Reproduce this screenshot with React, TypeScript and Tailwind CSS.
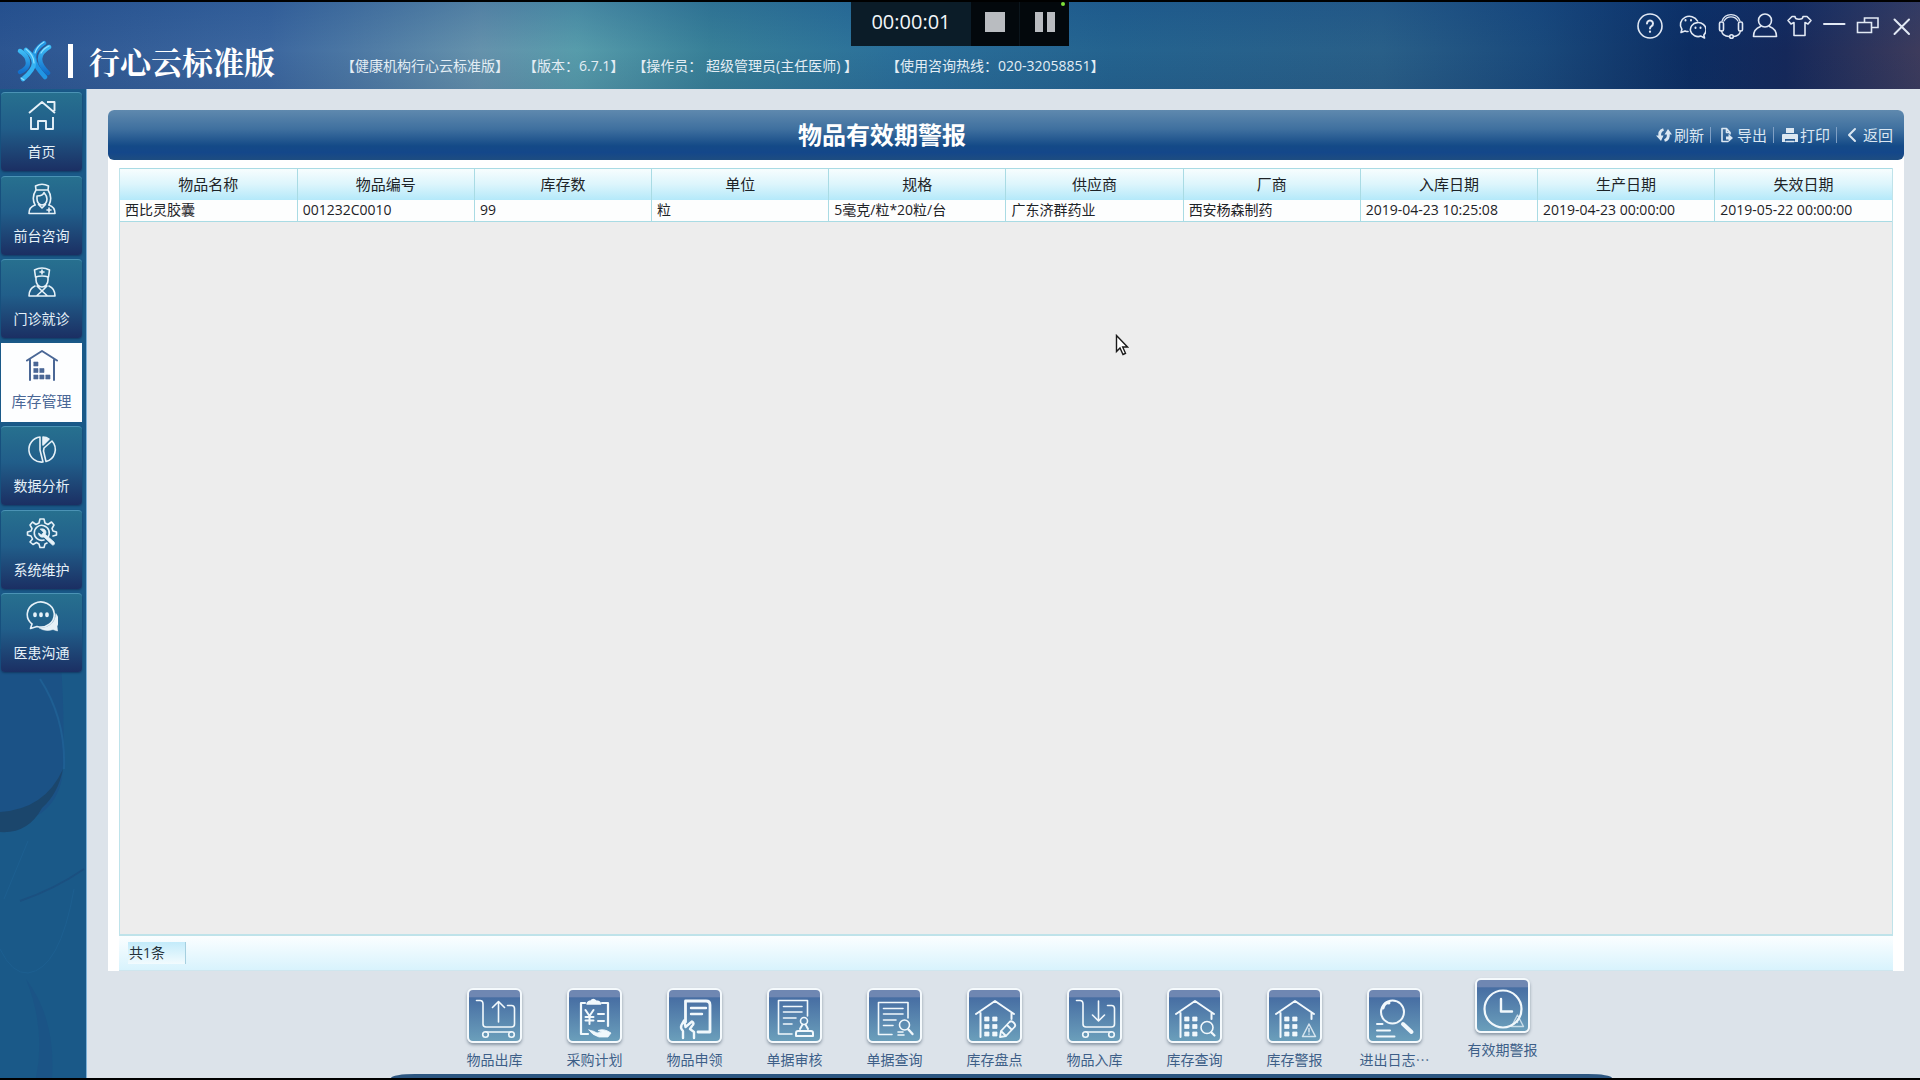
import type { ReactNode } from "react";

const FONT = "font-['Open_Sans','Noto_Sans_CJK_SC',sans-serif]";

function Icon({ children, box = 32, className }: { children: ReactNode; box?: number; className: string }) {
  return (
    <svg
      viewBox={`0 0 ${box} ${box}`}
      className={className}
      fill="none"
      stroke="currentColor"
      strokeWidth={1.6}
      strokeLinecap="round"
      strokeLinejoin="round"
      aria-hidden="true"
    >
      {children}
    </svg>
  );
}

/* ---------- top bar ---------- */

function Logo() {
  return (
    <svg viewBox="0 0 36 42" className="h-[42px] w-9" fill="none" aria-hidden="true">
      <defs>
        <linearGradient id="logoA" x1="0" y1="0" x2="0" y2="1">
          <stop offset="0" stopColor="#3dbcf6" />
          <stop offset="1" stopColor="#126fcb" />
        </linearGradient>
      </defs>
      <g stroke="url(#logoA)" strokeWidth="4.500" strokeLinecap="round" strokeLinejoin="round">
        <path d="M4 11 C9 14 12 19 12 23 C12 27 9 30 4 32" />
        <path d="M28 3 C22 7 18 12 18 17 C18 24 22 29 29 37" stroke="#2196e4" />
        <path d="M33 7 C28 10 24 14 24 19 C24 25 28 29 32 33" />
        <path d="M10 10 C15 14 18 18 18 23 C18 29 13 34 7 39" stroke="#35b2f2" />
      </g>
      <path d="M10 9 C15 13 18 18 18 23 M28 2 C23 5 20 9 19 13 M33 6 Q28 8 25 13 M5 38 8 40" stroke="#8fe0ff" strokeWidth="1.200" strokeLinecap="round" />
    </svg>
  );
}

const windowButtons: { label: string; width: string; icon: ReactNode }[] = [
  {
    label: "帮助",
    width: "w-10",
    icon: (
      <Icon box={28} className="size-7">
        <circle cx="14" cy="14" r="12" />
        <path d="M11 11.5a3 3 0 1 1 4.500 2.600q-1.500.9-1.500 2.400" strokeWidth="2" />
        <path d="M14 19.500v.3" strokeWidth="2.200" />
      </Icon>
    ),
  },
  {
    label: "微信",
    width: "w-11",
    icon: (
      <Icon box={28} className="size-7">
        <path d="M10 19.500q-1.500 0-3-.6L3 20.500l.9-3.300A9 8.300 0 1 1 19.500 9" />
        <path d="M28 17.500a7.800 7 0 1 0-5 6.600l3.500 1.900-.7-3A6.800 6.800 0 0 0 28 17.500Z" />
        <path d="M7.500 8v.5M13 8v.5M17.500 15.500v.5M22.500 15.500v.5" strokeWidth="2" />
      </Icon>
    ),
  },
  {
    label: "客服",
    width: "w-[34px]",
    icon: (
      <Icon box={28} className="size-7">
        <path d="M5 9a9.500 9.500 0 0 1 18 0M7 9a8 8 0 0 1 14 0" strokeWidth="1.200" />
        <rect x="2.500" y="10" width="4" height="9" rx="1.500" />
        <rect x="21.500" y="10" width="4" height="9" rx="1.500" />
        <path d="M4.500 19q1 5 7.500 5.500M23.500 19q-1 5-7 5.500" strokeWidth="1.300" />
        <circle cx="14.500" cy="24.500" r="1.800" />
      </Icon>
    ),
  },
  {
    label: "用户",
    width: "w-[34px]",
    icon: (
      <Icon box={28} className="size-7">
        <circle cx="14" cy="8.500" r="6.500" />
        <path d="M9.500 14.500Q2.500 17 2.500 24.500H25.500Q25.500 17 18.500 14.500" />
      </Icon>
    ),
  },
  {
    label: "换肤",
    width: "w-[34px]",
    icon: (
      <Icon box={28} className="size-7">
        <path d="M10 4.500H7L3 8.500l3 3.500 3-1.500V23.500H20V10.500l3 1.500 3-3.500L22 4.500H18a4 2.700 0 0 1-8 0Z" />
      </Icon>
    ),
  },
  {
    label: "最小化",
    width: "w-9",
    icon: (
      <Icon box={28} className="size-7">
        <path d="M4 12H24.500" strokeWidth="2" />
      </Icon>
    ),
  },
  {
    label: "还原",
    width: "w-8",
    icon: (
      <Icon box={28} className="size-7">
        <path d="M3.500 10.500H17.500V20.500H3.500ZM10.500 10V6H24V15.500H18" strokeLinejoin="miter" />
      </Icon>
    ),
  },
  {
    label: "关闭",
    width: "w-9",
    icon: (
      <Icon box={28} className="size-7">
        <path d="M6.500 7.500 21 22M21 7.500 6.500 22" strokeWidth="2" />
      </Icon>
    ),
  },
];

function Recorder() {
  return (
    <div className="absolute left-1/2 top-0 flex h-11 -translate-x-1/2 text-[#b9bcc0]">
      <div className="flex w-[120px] items-center justify-center bg-[#0b1c28] pb-1 text-xl leading-5 text-[#f3f6f8]">00:00:01</div>
      <button type="button" aria-label="停止" className="flex w-12 items-center justify-center bg-[#03080c] pb-2">
        <span className="mt-1 size-5 bg-current" />
      </button>
      <button type="button" aria-label="暂停" className="relative flex w-[50px] items-center justify-center gap-1 border-l border-[#0b151c] bg-[#03080c] pb-2">
        <span className="mt-1 h-5 w-2 bg-current" />
        <span className="mt-1 h-5 w-2 bg-current" />
        <span className="absolute right-1 top-0 size-1 rounded-full bg-[#7ee03a]" />
      </button>
    </div>
  );
}

function TopBar() {
  return (
    <header className="relative flex h-[87px] shrink-0 items-end bg-[linear-gradient(to_right,#2c5591_0%,#3c679f_14%,#6592ac_25%,#579cab_30%,#388098_37%,#2a6f9a_47%,#24638f_58%,#295f88_72%,#1a4a7c_80%,#0c2d62_88%,#15285a_93%,#3d3b5c_100%)]">
      <div className="absolute inset-0 bg-[linear-gradient(to_bottom,rgba(10,60,130,0.22),transparent_55%,rgba(20,40,80,0.1))]" />
      <div className="relative flex h-[50px] w-[341px] items-center gap-4 pb-1.5 pl-4">
        <Logo />
        <span className="h-[34px] w-[5px] bg-white" />
        <h1 className="whitespace-nowrap font-['Noto_Serif_CJK_SC','Noto_Sans_CJK_SC',serif] text-[31px] font-bold leading-8 text-white">
          行心云标准版
        </h1>
      </div>
      <div className="relative flex whitespace-nowrap pb-[13px] text-sm leading-5 text-[#e3edf4]">
        <span className="mr-3.5">【健康机构行心云标准版】</span>
        <span className="mr-2">【版本：6.7.1】</span>
        <span className="mr-7">【操作员： 超级管理员(主任医师) 】</span>
        <span>【使用咨询热线：020-32058851】</span>
      </div>
      <nav className="relative ml-auto flex self-start pt-[10px] text-[#e2e9f4]" aria-label="窗口">
        {windowButtons.map((b) => (
          <button key={b.label} type="button" aria-label={b.label} className={`${b.width} flex justify-center`}>
            {b.icon}
          </button>
        ))}
      </nav>
      <Recorder />
    </header>
  );
}

/* ---------- sidebar ---------- */

const sections: { label: string; active?: boolean; icon: ReactNode }[] = [
  {
    label: "首页",
    icon: <path d="M3 14 16 3 29 14M21 3H28.500V12M5 18V30H12V22H20V30H27V18" strokeLinecap="butt" strokeWidth="1.900" />,
  },
  {
    label: "前台咨询",
    icon: (
      <>
        <path d="M9.500 3Q16-.5 22.500 3L22 7H10ZM10 7C6 13 7 18 9 22M22 7C26 13 25 18 23 22" />
        <path d="M11 13Q17 13 18 9.500 21 13 21 16A5 6 0 0 1 11 16ZM12.500 21.500 16 25 19.500 21.500M9 22Q3 24 3 30.500H29Q29 24 23 22M21 27H25M23 25V29" />
      </>
    ),
  },
  {
    label: "门诊就诊",
    icon: (
      <>
        <path d="M8.500 4Q16 0 23.500 4L22.500 11Q16 9 9.500 11ZM14 6H18M16 4V8" />
        <path d="M10 11V14A6 7 0 0 0 22 14V11M9 20Q3 22.500 3 30H29Q29 22.500 23 20M11 20 16 25 21 20M16 25 11 29.500M16 25 21 29.500" />
      </>
    ),
  },
  {
    label: "库存管理",
    active: true,
    icon: (
      <>
        <path d="M1 11.500 16 2 31 11.500M4 11V31M28 11V31" strokeWidth="2" />
        <path
          d="M8 13H12V17H8ZM8 19.500H12V23.500H8ZM14 19.500H18V23.500H14ZM8 26H12V30H8ZM14 26H18V30H14ZM20 26H24V30H20Z"
          fill="currentColor"
          strokeWidth=".6"
        />
      </>
    ),
  },
  {
    label: "数据分析",
    icon: (
      <>
        <path d="M14 4A12.500 12.500 0 1 0 17 29L14 17Z" />
        <path d="M18 15 26 8A12.500 12.500 0 0 1 20 28.500L17.500 18Z" />
        <path d="M17 12V4Q20.500 4 23 6Z" fill="currentColor" />
      </>
    ),
  },
  {
    label: "系统维护",
    icon: (
      <>
        <path d="M14 2H18L19 6 22 7.500 25.500 5 28 8 26 11.500 27 14 30.500 15V18L27 19M14 2 13 6 10 7.500 6.500 5 4 8 6 11.500 5 14 1.500 15V18L5 19 6.500 22 4 25 7 27.500 10.500 25.500 13 27 14 30.500H18L19 27 21 26" />
        <path d="M22 20A7.500 7.500 0 1 0 18 23" />
        <path d="M14.500 12Q19 11 20 15L19.500 17.500 28 25Q29.500 28 26.500 28L18 20Q13 21 12.500 16L15.500 18 17.500 15.500Z" fill="currentColor" strokeWidth=".8" />
      </>
    ),
  },
  {
    label: "医患沟通",
    icon: (
      <>
        <path d="M30 14Q35 20 31 26L31.500 31 27 29.500Q19 32 13 27.800 28 28 30 14Z" fill="currentColor" strokeWidth=".6" />
        <path d="M6 24A13.500 12.500 0 1 1 11 26.500L4.500 28.500Z" />
        <path d="M9 14V15.500M15 14V15.500M21 14V15.500" strokeWidth="3.600" />
      </>
    ),
  },
];

function Sidebar() {
  return (
    <aside className="relative w-[87px] shrink-0 overflow-hidden border-r border-[#7fb0d6] bg-[#1a5988]">
      <svg viewBox="0 0 86 989" preserveAspectRatio="xMinYMin slice" className="absolute inset-0 size-full" aria-hidden="true">
        <path d="M0 560H60Q66 640 62 690 52 735 0 735Z" fill="#1b5286" />
        <path d="M0 723Q45 720 63 680 58 705 42 719 28 745 0 743Z" fill="#1b466c" />
        <path d="M40 590Q66 630 64 680" fill="none" stroke="#1f5f93" strokeWidth="2" />
        <path d="M84 780Q55 800 20 812" fill="none" stroke="#1b5080" strokeWidth="2" />
        <path d="M28 752 4 810M0 860Q12 885 28 884 60 880 74 800" fill="none" stroke="#1d5f90" strokeWidth="1" />
        <path d="M26 890Q46 940 36 989H52Q56 930 26 890Z" fill="#1b5486" />
      </svg>
      <nav className="relative flex h-[583px] flex-col justify-between pl-px pr-1 pt-[3px]" aria-label="主菜单">
        {sections.map((s) => (
          <a
            key={s.label}
            href="#"
            aria-current={s.active ? "page" : undefined}
            className={
              s.active
                ? "flex h-[79px] flex-col items-center gap-2.5 bg-[#fdfeff] pt-1.5 text-[15px] leading-5 text-[#4a6796]"
                : "flex h-[79px] flex-col items-center gap-[11px] rounded-sm border-t border-[#4b93b5] bg-[linear-gradient(to_bottom,#27708f,#215e8a_45%,#1b2f63)] pt-1.5 text-sm leading-5 text-[#e6f1f8] shadow-[0_1px_2px_#123a63]"
            }
          >
            <Icon className="size-8 shrink-0">{s.icon}</Icon>
            <span>{s.label}</span>
          </a>
        ))}
      </nav>
    </aside>
  );
}

/* ---------- report panel ---------- */

const actions: { label: string; icon: ReactNode }[] = [
  {
    label: "刷新",
    icon: (
      <>
        <path d="M7.500 2.500Q2.500 4 4 10.500M8.500 13.500Q13.500 12 12 5.500" strokeWidth="2.800" strokeLinecap="butt" />
        <path d="M0 8.500H7.500L5 14ZM8.500 7.500H16L12 2Z" fill="currentColor" stroke="none" />
      </>
    ),
  },
  {
    label: "导出",
    icon: (
      <>
        <path d="M9 14.500H3V1.500H7.500L11 5.500V7M7.500 1.500V5.500H11" />
        <path d="M7 9.500H9.500V7L14 11 9.500 15V12.500H7Z" fill="currentColor" stroke="none" />
      </>
    ),
  },
  {
    label: "打印",
    icon: (
      <>
        <path d="M4 1H12V6H4ZM0 8Q0 7 1 7H15Q16 7 16 8V15H13V12H3V15H0Z" fill="currentColor" stroke="none" />
        <path d="M4 14.500H12" />
      </>
    ),
  },
  { label: "返回", icon: <path d="M10 2 4 8 10 14" strokeWidth="2" /> },
];

function PanelTitle() {
  return (
    <div className="flex h-[50px] shrink-0 items-center rounded-md bg-[linear-gradient(to_bottom,#5f89ae,#3f709f_38%,#144a87_72%,#14478a_85%,#1e4d80)] pr-[11px]">
      <h2 className="flex-1 text-center text-2xl font-bold text-white">物品有效期警报</h2>
      <div className="flex items-center text-[15px] leading-5 text-[#dbe7f2]">
        {actions.map((a, i) => (
          <div key={a.label} className="flex items-center">
            {i > 0 && <span className="ml-1.5 mr-2 h-4 w-px bg-[#7f9fc4]" />}
            <button type="button" className="flex items-center gap-0.5">
              <Icon box={16} className="size-4">{a.icon}</Icon>
              <span>{a.label}</span>
            </button>
          </div>
        ))}
      </div>
    </div>
  );
}

const columns = ["物品名称", "物品编号", "库存数", "单位", "规格", "供应商", "厂商", "入库日期", "生产日期", "失效日期"];
const rows = [
  ["西比灵胶囊", "001232C0010", "99", "粒", "5毫克/粒*20粒/台", "广东济群药业", "西安杨森制药", "2019-04-23 10:25:08", "2019-04-23 00:00:00", "2019-05-22 00:00:00"],
];

function StockTable() {
  return (
    <table className="w-full table-fixed border-collapse text-[#1d2327]">
      <thead>
        <tr className="h-[31px] bg-[linear-gradient(to_bottom,#f7fdfe,#dcf5fc_50%,#b4e9fa)]">
          {columns.map((c) => (
            <th
              key={c}
              scope="col"
              className="border border-b-0 border-[#a9dbe4] p-0 text-[15px] font-normal leading-5 first:border-l-0 last:border-r-0"
            >
              {c}
            </th>
          ))}
        </tr>
      </thead>
      <tbody>
        {rows.map((r) => (
          <tr key={r[1]} className="h-[22px] bg-[#fdfefe]">
            {r.map((v, i) => (
              <td
                key={columns[i]}
                className="whitespace-nowrap border border-t-0 border-[#a9dbe4] p-0 pl-[5px] text-sm leading-5 first:border-l-0 last:border-r-0"
              >
                {v}
              </td>
            ))}
          </tr>
        ))}
      </tbody>
    </table>
  );
}

/* ---------- bottom dock ---------- */

const house = (
  <>
    <path d="M8 25 27 12 46 25M12.500 24V48M43.500 24V30" strokeWidth="2" />
    <path
      d="M17 28H21V32H17ZM25 28H29V32H25ZM17 35.500H21V39.500H17ZM25 35.500H29V39.500H25ZM17 43H21V47H17ZM25 43H29V47H25Z"
      fill="currentColor"
      strokeWidth=".8"
    />
  </>
);

const cart = (
  <>
    <path d="M8.500 11.500H12Q15 11.500 15 15V35Q15 38 18 38H43.500Q46.500 38 46.500 35V19.500Q46.500 16.500 43.500 16.500H39.500" />
    <path d="M18 43H43" />
    <circle cx="17.500" cy="45.500" r="2.800" />
    <circle cx="43.500" cy="45.500" r="2.800" />
  </>
);

const dock: { label: string; icon: ReactNode }[] = [
  { label: "物品出库", icon: <>{cart}<path d="M30.500 33V13M24.500 18.500 30.500 12.500 36.500 18.500" /></> },
  {
    label: "采购计划",
    icon: (
      <>
        <path d="M17 14H13V45H20M34 14H40V37" strokeWidth="2.200" />
        <path d="M19 15Q20 12 23 12 25 9 28 12 32 12 32.500 15Z" fill="currentColor" />
        <path d="M17.500 21 21.500 27 25.500 21M21.500 27V35M17.500 28H25.500M17.500 31.500H25.500M30 25H36M30 32H36" strokeWidth="2" />
        <path d="M21 41Q26 42 29 44L34 43 30 41.500Q36 39 43 44L40 48H31Q24 46 21 41Z" fill="currentColor" strokeWidth=".8" />
      </>
    ),
  },
  {
    label: "物品申领",
    icon: (
      <>
        <path d="M17.500 33V12H38Q42 12 42 16V43H30" strokeWidth="2.800" />
        <path d="M23 19H38M23 25H34" strokeWidth="2.400" />
        <path d="M15 49V42Q12 39 13.500 36L16 31.500 17.500 38 24 32.500Q27 34 24 37L22 40 26 43V49" strokeWidth="2.400" />
      </>
    ),
  },
  {
    label: "单据审核",
    icon: (
      <>
        <path d="M24 45H10.500V11.500H39.500V27" />
        <path d="M15.500 17.500H34M15.500 23H34M15.500 29H28M15.500 35H24" />
        <circle cx="36" cy="32" r="3.500" />
        <path d="M34.500 35.500 32 40M37.500 35.500 40 40M28 47V44Q28 42 30 42H43Q45 42 45 44V47Z" strokeWidth="2" />
      </>
    ),
  },
  {
    label: "单据查询",
    icon: (
      <>
        <path d="M24 45.500H10.500V13.500H40V29" />
        <path d="M15.500 19.500H35M15.500 25H35M15.500 31H28M15.500 36.500H25M30 43H35M30 46H36" />
        <circle cx="36.500" cy="36" r="5" />
        <path d="M40.500 40.500 44.500 45" strokeWidth="2.400" />
      </>
    ),
  },
  {
    label: "库存盘点",
    icon: (
      <>
        {house}
        <path d="M32 48 33 42 41.500 33Q43 31.500 45 33L46.500 34.500Q48 36.500 46.500 38L38 47ZM39 36 43.500 40.500M33 42 38 47" strokeWidth="1.800" />
      </>
    ),
  },
  { label: "物品入库", icon: <>{cart}<path d="M30.500 12V31M24.500 26 30.500 32 36.500 26" /></> },
  {
    label: "库存查询",
    icon: (
      <>
        {house}
        <circle cx="39" cy="38.500" r="6" />
        <path d="M43.500 43.500 46.500 46.500" strokeWidth="2.200" />
      </>
    ),
  },
  {
    label: "库存警报",
    icon: (
      <>
        {house}
        <path d="M41 35 34.500 47.500H47.500ZM41 39.500V43M41 45V45.300" strokeWidth="1.500" opacity=".8" />
      </>
    ),
  },
  {
    label: "进出日志…",
    icon: (
      <>
        <circle cx="24.500" cy="23" r="11.500" strokeWidth="2" />
        <path d="M15 19Q17 13 21 14" strokeWidth="3" />
        <path d="M35 35 43.500 43" strokeWidth="4" />
        <path d="M9 35H14.500M9 41.500H22M9 47.500H26.500" strokeWidth="2" />
      </>
    ),
  },
  {
    label: "有效期警报",
    icon: (
      <>
        <circle cx="27" cy="30" r="18.500" strokeWidth="2.200" />
        <path d="M25 20V32.500H36" strokeWidth="2.400" />
        <path d="M41.500 36 35.500 47.500H47.500ZM41.500 40V43.500" strokeWidth="1.400" opacity=".7" />
      </>
    ),
  },
];

function Dock() {
  return (
    <nav
      className="flex h-[103px] shrink-0 items-end justify-center gap-6 pb-[5px] pr-2.5 font-['Noto_Sans_CJK_SC',sans-serif]"
      aria-label="库存功能"
    >
      {dock.map((d, i) => (
        <a
          key={d.label}
          href="#"
          lang="zh-CN"
          className={
            i === dock.length - 1
              ? "mb-2.5 ml-2 flex w-[76px] flex-col items-center gap-1.5 text-sm leading-5 text-[#3d5f88]"
              : "flex w-[76px] flex-col items-center gap-1.5 text-sm leading-5 text-[#3d5f88]"
          }
        >
          <span className="flex size-[55px] items-center justify-center rounded-md border-2 border-[#f4f9fc] bg-[linear-gradient(to_bottom,#6f87b2_0%,#6f87b2_14%,#476ea3_15%,#6b9fbb_100%)] text-[#f1f8fc] shadow-[0_2px_3px_rgba(60,80,100,0.5)]">
            <Icon box={54} className="size-[54px] shrink-0">{d.icon}</Icon>
          </span>
          <span className="whitespace-nowrap">{d.label}</span>
        </a>
      ))}
    </nav>
  );
}

function Cursor() {
  return (
    <svg viewBox="0 0 14 22" className="absolute left-[1115px] top-[332px] h-[22px] w-3.5" aria-hidden="true">
      <path d="M1.500 1.500V17.500L5 14 8 20.500 10.500 19.300 7.700 13H12.500Z" fill="#fff" stroke="#1a1a1a" strokeWidth="1.400" />
    </svg>
  );
}

export default function App() {
  return (
    <div className={`relative flex h-screen flex-col overflow-hidden border-y-2 border-black bg-[#dce3ea] ${FONT}`}>
      <TopBar />
      <div className="flex min-h-0 flex-1">
        <Sidebar />
        <div className="flex min-w-0 flex-1 flex-col">
          <main className="ml-[21px] mr-4 mt-[21px] flex min-h-0 flex-1 flex-col rounded-t-md bg-white">
            <PanelTitle />
            <div className="mx-[11px] mt-2 min-h-0 flex-1 border-x border-b-2 border-[#bfe3ea] bg-[#ededed]">
              <StockTable />
            </div>
            <div className="mx-[11px] flex h-[35px] shrink-0 items-center border-b border-[#cfe6ee] bg-[linear-gradient(to_bottom,#fbfeff,#d8f3fd)] pl-[9px]">
              <output className="w-[58px] border-r border-[#a5cfdf] bg-[linear-gradient(to_bottom,#c3ebfa,#f2fbfe)] pl-px text-sm leading-[22px] text-[#23313a]">
                共1条
              </output>
            </div>
          </main>
          <Dock />
          <div className="ml-[304px] mr-[308px] h-1 shrink-0 bg-[#2c5681] [border-radius:24px_24px_0_0/4px_4px_0_0]" />
        </div>
      </div>
      <Cursor />
    </div>
  );
}
